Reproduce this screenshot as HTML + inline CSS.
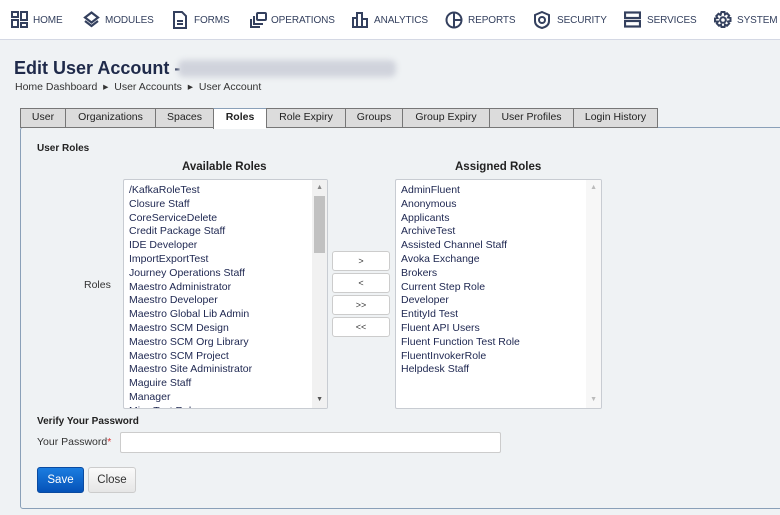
<!DOCTYPE html>
<html><head><style>
*{margin:0;padding:0;box-sizing:border-box}
body{width:780px;height:515px;overflow:hidden;background:#eff2f4;font-family:"Liberation Sans",Arial,sans-serif;color:#222;position:relative}
.hdr{position:absolute;left:0;top:0;width:780px;height:40px;background:#fff;border-bottom:1px solid #d4d8e4}
.nav{position:absolute;top:15px;font-size:10px;color:#34405e;letter-spacing:-0.1px}
.ic{position:absolute;top:11px}
.a{position:absolute}
h1{position:absolute;left:14px;top:58px;font-size:18px;font-weight:bold;color:#1f2a4a}
.blur{position:absolute;left:178px;top:60px;width:218px;height:17px;background:#d0d3dc;filter:blur(3px);border-radius:6px}
.bc{position:absolute;left:15px;top:81px;font-size:10.5px;color:#333}
.tab{position:absolute;top:108px;height:20px;border:1px solid #777;border-right:none;background:#dcdcdc;font-size:10.5px;color:#222;text-align:center;line-height:17px}
.tab.act{background:#fff;border-bottom:none;border-top:1px solid #8aa0b8;height:21px}
.panel{position:absolute;left:20px;top:127px;width:770px;height:382px;border:1px solid #8aa0b8;border-radius:3px;background:#eff2f4}
.lb{position:absolute;font-size:10.5px;font-weight:bold;color:#222}
.list{position:absolute;top:179px;height:230px;background:#fff;border:1px solid #c8ccd2;border-radius:2px;font-size:10.5px;color:#1d2650;line-height:13.8px;padding:4px 5px;overflow:hidden}
.btn{position:absolute;left:332px;width:58px;height:20px;background:#fff;border:1px solid #ccc;border-radius:3px;font-size:9px;text-align:center;line-height:18px;color:#333}
</style></head><body>
<div class="hdr">
<svg class="ic" style="left:11px" width="17" height="17" viewBox="0 0 17 17" fill="none" stroke="#34405e" stroke-width="2"><rect x="1" y="1" width="6" height="5"/><rect x="10" y="1" width="6" height="8"/><rect x="1" y="9" width="6" height="7"/><rect x="10" y="12" width="6" height="4"/></svg>
<span class="nav" style="left:33px">HOME</span>
<svg class="ic" style="left:83px" width="17" height="17" viewBox="0 0 17 17" fill="none" stroke="#34405e" stroke-width="2.2"><path d="M8.5 1.5L15 6.5L8.5 11.5L2 6.5Z"/><path d="M2 10L8.5 15L15 10"/></svg>
<span class="nav" style="left:105px">MODULES</span>
<svg class="ic" style="left:172px" width="16" height="18" viewBox="0 0 16 18" fill="none" stroke="#34405e" stroke-width="2"><path d="M2 1h8l4 4v12H2z"/><path d="M5 10h6M5 13h6"/></svg>
<span class="nav" style="left:194px">FORMS</span>
<svg class="ic" style="left:249px" width="18" height="17" viewBox="0 0 18 17" fill="none" stroke="#34405e" stroke-width="2"><rect x="8" y="2" width="9" height="7" rx="1"/><path d="M5 5v8h9M2 8v8h9"/></svg>
<span class="nav" style="left:271px">OPERATIONS</span>
<svg class="ic" style="left:351px" width="18" height="17" viewBox="0 0 18 17" fill="none" stroke="#34405e" stroke-width="2"><path d="M1 16h16M2 16V7h4v9M6 16V2h5v14M11 16V8h5v8"/></svg>
<span class="nav" style="left:374px">ANALYTICS</span>
<svg class="ic" style="left:445px" width="18" height="18" viewBox="0 0 18 18" fill="none" stroke="#34405e" stroke-width="2"><circle cx="9" cy="9" r="7.5"/><path d="M9 1.5v15M9 9h7.5"/></svg>
<span class="nav" style="left:468px">REPORTS</span>
<svg class="ic" style="left:534px" width="16" height="18" viewBox="0 0 16 18" fill="none" stroke="#34405e" stroke-width="2"><path d="M8 1L15 4v6c0 4-3 6-7 7C4 16 1 14 1 10V4z"/><circle cx="8" cy="9" r="3"/></svg>
<span class="nav" style="left:557px">SECURITY</span>
<svg class="ic" style="left:624px" width="17" height="17" viewBox="0 0 17 17" fill="none" stroke="#34405e" stroke-width="2.2"><rect x="1" y="1.5" width="15" height="5.5"/><rect x="1" y="10" width="15" height="5.5"/></svg>
<span class="nav" style="left:647px">SERVICES</span>
<svg class="ic" style="left:714px" width="18" height="18" viewBox="0 0 18 18" fill="none" stroke="#34405e" stroke-width="2"><path d="M7.5 1h3l.5 2.5 2-1.2 2.2 2.2-1.2 2 2.5.5v3l-2.5.5 1.2 2-2.2 2.2-2-1.2-.5 2.5h-3l-.5-2.5-2 1.2-2.2-2.2 1.2-2L1 10.5v-3l2.5-.5-1.2-2 2.2-2.2 2 1.2z"/><circle cx="9" cy="9" r="2.8"/></svg>
<span class="nav" style="left:737px">SYSTEM</span>
</div>
<h1>Edit User Account -</h1>
<div class="blur"></div>
<div class="bc">Home Dashboard &nbsp;▸&nbsp; User Accounts &nbsp;▸&nbsp; User Account</div>
<div class="panel"></div>
<div class="tab" style="left:20px;width:45px">User</div>
<div class="tab" style="left:65px;width:90px">Organizations</div>
<div class="tab" style="left:155px;width:58px">Spaces</div>
<div class="tab act" style="left:213px;width:53px;font-weight:bold">Roles</div>
<div class="tab" style="left:266px;width:79px">Role Expiry</div>
<div class="tab" style="left:345px;width:57px">Groups</div>
<div class="tab" style="left:402px;width:87px">Group Expiry</div>
<div class="tab" style="left:489px;width:84px">User Profiles</div>
<div class="tab" style="left:573px;width:85px;border-right:1px solid #777">Login History</div>
<div class="lb" style="left:37px;top:143px;font-size:10px">User Roles</div>
<div class="lb" style="left:182px;top:161px;font-size:11.5px">Available Roles</div>
<div class="lb" style="left:455px;top:161px;font-size:11.5px">Assigned Roles</div>
<div class="a" style="left:84px;top:279px;font-size:10.5px;color:#333">Roles</div>
<div class="list" style="left:123px;width:205px">/KafkaRoleTest<br>Closure Staff<br>CoreServiceDelete<br>Credit Package Staff<br>IDE Developer<br>ImportExportTest<br>Journey Operations Staff<br>Maestro Administrator<br>Maestro Developer<br>Maestro Global Lib Admin<br>Maestro SCM Design<br>Maestro SCM Org Library<br>Maestro SCM Project<br>Maestro Site Administrator<br>Maguire Staff<br>Manager<br>Misc Test Role
<div class="a" style="right:0;top:0;width:15px;height:228px;background:#f1f1f1"></div>
<div class="a" style="right:2px;top:16px;width:11px;height:57px;background:#c1c1c1"></div>
<div class="a" style="right:4px;top:4px;font-size:7px;color:#888;line-height:8px">▲</div>
<div class="a" style="right:4px;bottom:4px;font-size:7px;color:#555;line-height:8px">▼</div>
</div>
<div class="btn" style="top:251px">&gt;</div>
<div class="btn" style="top:273px">&lt;</div>
<div class="btn" style="top:295px">&gt;&gt;</div>
<div class="btn" style="top:317px">&lt;&lt;</div>
<div class="list" style="left:395px;width:207px">AdminFluent<br>Anonymous<br>Applicants<br>ArchiveTest<br>Assisted Channel Staff<br>Avoka Exchange<br>Brokers<br>Current Step Role<br>Developer<br>EntityId Test<br>Fluent API Users<br>Fluent Function Test Role<br>FluentInvokerRole<br>Helpdesk Staff
<div class="a" style="right:0;top:0;width:15px;height:228px;background:#f7f7f7"></div>
<div class="a" style="right:4px;top:4px;font-size:7px;color:#bbb;line-height:8px">▲</div>
<div class="a" style="right:4px;bottom:4px;font-size:7px;color:#bbb;line-height:8px">▼</div>
</div>
<div class="lb" style="left:37px;top:416px;font-size:10px">Verify Your Password</div>
<div class="a" style="left:37px;top:436px;font-size:10.5px;color:#333">Your Password<span style="color:#d33">*</span></div>
<div class="a" style="left:120px;top:432px;width:381px;height:21px;background:#fff;border:1px solid #ccc;border-radius:2px"></div>
<div class="a" style="left:37px;top:467px;width:47px;height:26px;background:linear-gradient(#1b7de0,#0552b8);border:1px solid #0a4aa0;border-radius:3px;color:#fff;font-size:11.5px;text-align:center;line-height:24px">Save</div>
<div class="a" style="left:88px;top:467px;width:48px;height:26px;background:linear-gradient(#fafafa,#e6e6e6);border:1px solid #ccc;border-radius:3px;color:#333;font-size:11.5px;text-align:center;line-height:24px">Close</div>
</body></html>
